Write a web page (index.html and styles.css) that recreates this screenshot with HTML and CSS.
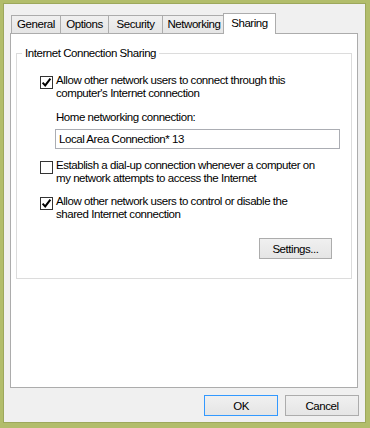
FILE: index.html
```html
<!DOCTYPE html>
<html lang="en">
<head>
    <meta charset="UTF-8">
    <meta name="viewport" content="width=device-width, initial-scale=1.0">
    <title>Sharing Properties</title>
    <link rel="stylesheet" href="styles.css">
</head>
<body>
    <div class="dialog">
        <!-- Tab strip -->
        <div class="tabs">
            <div class="tab tab-general">General</div>
            <div class="tab tab-options">Options</div>
            <div class="tab tab-security">Security</div>
            <div class="tab tab-networking">Networking</div>
            <div class="tab tab-active">Sharing</div>
        </div>

        <div class="panel">
            <fieldset class="group">
                <legend>Internet Connection Sharing</legend>
                <div class="group-body">
                    <div class="option">
                        <span class="check">
                            <svg width="11" height="11" viewBox="0 0 11 11"><path d="M1.6 5.6 L4.2 8.4 L9.4 1.6" fill="none" stroke="#000" stroke-width="2"/></svg>
                        </span>
                        <span class="option-text">Allow other network users to connect through this<br>computer's Internet connection</span>
                    </div>

                    <div class="field">
                        <div class="field-label">Home networking connection:</div>
                        <div class="textbox">Local Area Connection* 13</div>
                    </div>

                    <div class="option option-spaced">
                        <span class="check"></span>
                        <span class="option-text">Establish a dial-up connection whenever a computer on<br>my network attempts to access the Internet</span>
                    </div>

                    <div class="option option-spaced">
                        <span class="check">
                            <svg width="11" height="11" viewBox="0 0 11 11"><path d="M1.6 5.6 L4.2 8.4 L9.4 1.6" fill="none" stroke="#000" stroke-width="2"/></svg>
                        </span>
                        <span class="option-text">Allow other network users to control or disable the<br>shared Internet connection</span>
                    </div>

                    <div class="actions">
                        <button type="button" class="btn btn-settings">Settings...</button>
                    </div>
                </div>
            </fieldset>
        </div>

        <div class="footer">
            <button type="button" class="btn btn-default">OK</button>
            <button type="button" class="btn">Cancel</button>
        </div>
    </div>
</body>
</html>
```

FILE: styles.css
```css
body {
    margin: 0;
    padding: 3px 0 0 3px;
    background-color: #b2bd6b; /* window frame */
    font-family: "Liberation Sans", Arial, sans-serif;
    font-size: 11.5px;
    letter-spacing: -0.45px;
    color: #000;
}

.dialog {
    box-sizing: border-box;
    width: 363px;
    height: 420px;
    border: 1px solid #9da85c;
    background-color: #f0f0f0;
}

/* Tabs */
.tabs {
    display: flex;
    align-items: flex-end;
    height: 20px;
    margin-top: 9px;
    padding-left: 7px;
}

.tab {
    box-sizing: border-box;
    height: 18px;
    border: 1px solid #acacac;
    border-bottom: none;
    background: linear-gradient(#f0f0f0, #e5e5e5);
    text-align: center;
    line-height: 16px;
    margin-left: -1px;
}

.tab-general { width: 50px; margin-left: 0; }
.tab-options { width: 49px; }
.tab-security { width: 55px; }
.tab-networking { width: 64px; }

.tab-active {
    position: relative;
    z-index: 1;
    width: 53px;
    height: 21px;
    margin-left: -3px;
    margin-bottom: -1px;
    background: #fff;
    line-height: 18px;
}

.panel {
    box-sizing: border-box;
    width: 348px;
    height: 355px;
    margin-left: 6px;
    padding: 13px 5px 0 5px;
    border: 1px solid #acacac;
    background-color: #fff;
}

/* Group box */
.group {
    min-width: 0;
    margin: 0;
    padding: 0;
    border: 1px solid #dcdcdc;
}

.group legend {
    margin-left: 5px;
    padding: 0 3px;
    line-height: 13px;
}

.group-body {
    padding: 14px 19px 19px 23px;
}

.option {
    display: flex;
    align-items: flex-start;
    gap: 3px;
    white-space: nowrap;
}

.option-spaced {
    margin-top: 10px;
}

.option-text {
    line-height: 13px;
}

.check {
    box-sizing: border-box;
    flex: none;
    width: 13px;
    height: 13px;
    margin-top: 2px;
    border: 1px solid #333;
    background-color: #fff;
}

.check svg {
    display: block;
}

.field {
    margin: 11px 0 0 15px;
}

.field-label {
    margin-left: 1px;
    line-height: 13px;
}

.textbox {
    box-sizing: border-box;
    width: 285px;
    height: 20px;
    margin-top: 5px;
    padding-left: 3px;
    border: 1px solid #abadb3;
    line-height: 18px;
    background-color: #fff;
}

.actions {
    display: flex;
    justify-content: flex-end;
    margin-top: 17px;
}

/* Buttons */
.btn {
    box-sizing: border-box;
    width: 74px;
    height: 21px;
    padding: 0;
    border: 1px solid #acacac;
    background: linear-gradient(#f0f0f0, #e5e5e5);
    font-family: inherit;
    font-size: inherit;
    letter-spacing: inherit;
    color: #000;
}

.btn-settings {
    width: 73px;
}

.btn-default {
    border-color: #3399ff;
}

.footer {
    display: flex;
    justify-content: flex-end;
    gap: 7px;
    margin-top: 7px;
    padding-right: 6px;
}
```
